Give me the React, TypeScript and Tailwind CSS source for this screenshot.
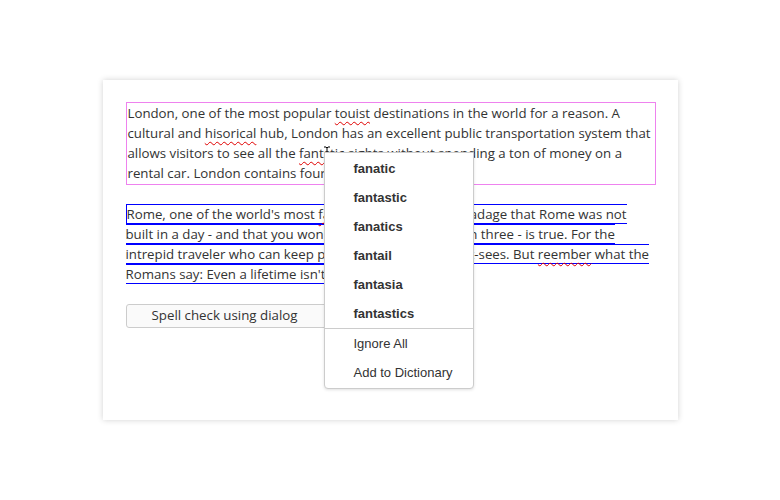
import React from "react";

const suggestions = ["fanatic", "fantastic", "fanatics", "fantail", "fantasia", "fantastics"];

const Miss: React.FC<{ children: React.ReactNode }> = ({ children }) => (
  <span className="underline decoration-wavy decoration-[#e00000] decoration-1 underline-offset-[3px]">{children}</span>
);

export default function App() {
  return (
    <div className="w-[780px] h-[500px] bg-white flex items-center justify-center font-['Open_Sans',sans-serif]">
      <div className="relative w-[575px] h-[340px] bg-white shadow-[0_0_6px_rgba(0,0,0,0.18)] pt-[22px] px-[23px]">
        {/* editable div */}
        <div className="w-[530px] whitespace-nowrap border border-[#ee82ee] text-[13.25px] leading-[20px] text-[#333] px-px pb-px">
          London, one of the most popular <Miss>touist</Miss> destinations in the world for a reason. A
          <br />
          cultural and <Miss>hisorical</Miss> hub, London has an excellent public transportation system that
          <br />
          allows visitors to see all the <Miss>fantstic</Miss> sights without spending a ton of money on a
          <br />
          rental car. London contains four World Heritage Sites.
        </div>

        {/* inline editable span */}
        <div className="w-[530px] whitespace-nowrap mt-[19px] text-[13.25px] leading-[20px] text-[#333]">
          <span className="border border-[#0000ff]">
            Rome, one of the world's most <Miss>fasinating</Miss> cities. The old adage that Rome was not
            <br />
            built in a day - and that you won't see it in one, or even in three - is true. For the
            <br />
            intrepid traveler who can keep pace, there are new must-sees. But <Miss>reember</Miss> what the
            <br />
            Romans say: Even a lifetime isn't enough.
          </span>
        </div>

        <button className="mt-[20px] w-[220px] h-[24px] rounded-[3px] border border-[#ccc] bg-[#fafafa] text-[13.3px] text-[#333] text-left pl-[25px]">
          Spell check using dialog
        </button>

        {/* mouse cursor */}
        <svg className="absolute left-[220px] top-[66px]" width="8" height="16" viewBox="0 0 8 16">
          <path d="M1 1h2l1 1 1-1h2M4 2v12M1 15h2l1-1 1 1h2" fill="none" stroke="#000" strokeWidth="1" />
        </svg>

        {/* context menu */}
        <div className="absolute left-[221px] top-[72px] w-[150px] bg-white border border-[#ccc] rounded-b-[4px] shadow-[0_1px_3px_rgba(0,0,0,0.12)] font-['Liberation_Sans',Arial,sans-serif] text-[13px] text-[#333]">
          <div className="pt-[1px]">
            {suggestions.map((s) => (
              <div key={s} className="h-[29px] flex items-center pl-[29px] font-bold">
                {s}
              </div>
            ))}
          </div>
          <div className="h-px bg-[#ccc]" />
          <div className="pb-[1px]">
            <div className="h-[29px] flex items-center pl-[29px]">Ignore All</div>
            <div className="h-[29px] flex items-center pl-[29px]">Add to Dictionary</div>
          </div>
        </div>
      </div>
    </div>
  );
}
